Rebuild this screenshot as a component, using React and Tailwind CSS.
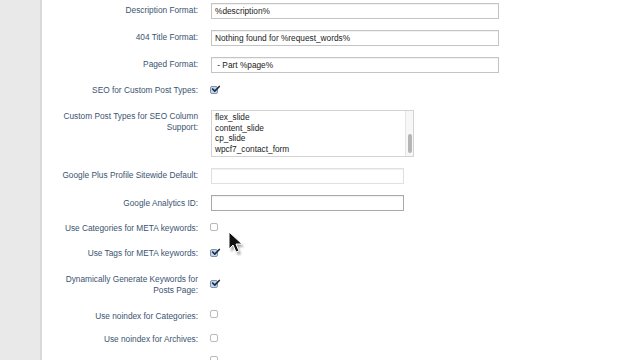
import { Check } from 'lucide-react';

const font = { fontFamily: '"Liberation Sans", Arial, sans-serif' };

function Label({ children }) {
    return (
        <div className="w-[156px] shrink-0 text-right text-[8.3px] leading-[11px] text-[#3b5470]">
            {children}
        </div>
    );
}

function Box({ checked }) {
    if (checked) {
        return (
            <div className="relative w-[8px] h-[8px] rounded-[2px] border border-[#7d93ae] bg-[#c5d5ea]">
                <Check size={10} strokeWidth={4} className="absolute -top-[3px] left-0 text-[#1b2c47]" />
            </div>
        );
    }
    return <div className="w-[8px] h-[8px] rounded-[2px] border border-[#b9b9b9] bg-white" />;
}

function Row({ h, label, children, top = false, pt = 0 }) {
    return (
        <div className={`shrink-0 flex gap-[13px] ${top ? 'items-start' : 'items-center'}`} style={{ height: h, paddingTop: pt }}>
            <Label>{label}</Label>
            <div className="flex-1">{children}</div>
        </div>
    );
}

function TextInput({ value, w = 'w-[288px]', border = 'border-[#c4c4c4]' }) {
    return (
        <div className={`${w} h-[16px] border ${border} bg-white px-[3px] text-[8.3px] leading-[14px] text-[#222] shadow-[inset_0_1px_1px_rgba(0,0,0,0.06)]`}>
            {value}
        </div>
    );
}

export default function App() {
    return (
        <div className="w-[640px] h-[360px] overflow-hidden flex bg-white relative" style={font}>
            <div className="w-[40px] shrink-0 bg-[#e9e9e9]" />
            <div className="w-[2px] shrink-0 bg-[#dadada]" />
            <div className="flex-1 flex flex-col">
                <Row h={21} label="Description Format:">
                    <TextInput value="%description%" />
                </Row>
                <Row h={33} label="404 Title Format:">
                    <TextInput value="Nothing found for %request_words%" />
                </Row>
                <Row h={21} label="Paged Format:">
                    <TextInput value={'\u00a0- Part %page%'} />
                </Row>
                <Row h={30} label="SEO for Custom Post Types:">
                    <div className="-ml-[1px]"><Box checked /></div>
                </Row>
                <Row h={57} pt={5} top label={<span className="block pt-[1px]">Custom Post Types for SEO Column<br />Support:</span>}>
                    <div className="w-[203px] h-[47px] border border-[#d3d3d3] bg-white flex">
                        <div className="flex-1 px-[3px] pt-[1px] text-[8.3px] leading-[10.7px] text-[#222]">
                            <div>flex_slide</div>
                            <div>content_slide</div>
                            <div>cp_slide</div>
                            <div>wpcf7_contact_form</div>
                        </div>
                        <div className="w-[8px] border-l border-[#e6e6e6] bg-[#f7f7f7] flex flex-col justify-end pb-[3px] items-center">
                            <div className="w-[4px] h-[19px] rounded-full bg-[#b5b5b5]" />
                        </div>
                    </div>
                </Row>
                <Row h={27} label="Google Plus Profile Sitewide Default:">
                    <TextInput value="" w="w-[193px]" border="border-[#e0e0e0]" />
                </Row>
                <Row h={28} label="Google Analytics ID:">
                    <TextInput value="" w="w-[193px]" border="border-[#a9a9a9]" />
                </Row>
                <Row h={22} label="Use Categories for META keywords:">
                    <div className="-ml-[1px] -mt-[2px]"><Box /></div>
                </Row>
                <Row h={28} label="Use Tags for META keywords:">
                    <div className="-ml-[1px]"><Box checked /></div>
                </Row>
                <Row h={35} label={<span>Dynamically Generate Keywords for<br />Posts Page:</span>}>
                    <div className="-ml-[1px] -mt-[2px]"><Box checked /></div>
                </Row>
                <Row h={28} label="Use noindex for Categories:">
                    <div className="-ml-[1px] -mt-[5px]"><Box /></div>
                </Row>
                <Row h={18} label="Use noindex for Archives:">
                    <div className="-ml-[1px] -mt-[2px]"><Box /></div>
                </Row>
                <Row h={28} label="">
                    <div className="-ml-[1px] -mt-[4px]"><Box /></div>
                </Row>
            </div>
            {/* mouse pointer */}
            <svg className="absolute left-[227px] top-[230px]" width="20" height="28" viewBox="0 0 20 28">
                <defs>
                    <filter id="sh" x="-50%" y="-50%" width="200%" height="200%">
                        <feGaussianBlur stdDeviation="1.2" />
                    </filter>
                </defs>
                <path d="M3 3 L3 20 L7 16 L10 23 L13 22 L10 15 L16 15 Z" fill="rgba(0,0,0,0.35)" filter="url(#sh)" transform="translate(1,2)" />
                <path d="M2 2 L2 19 L6 15 L9 22 L12 21 L9 14 L15 14 Z" fill="#111" stroke="#fff" strokeWidth="1" strokeLinejoin="round" />
            </svg>
        </div>
    );
}
